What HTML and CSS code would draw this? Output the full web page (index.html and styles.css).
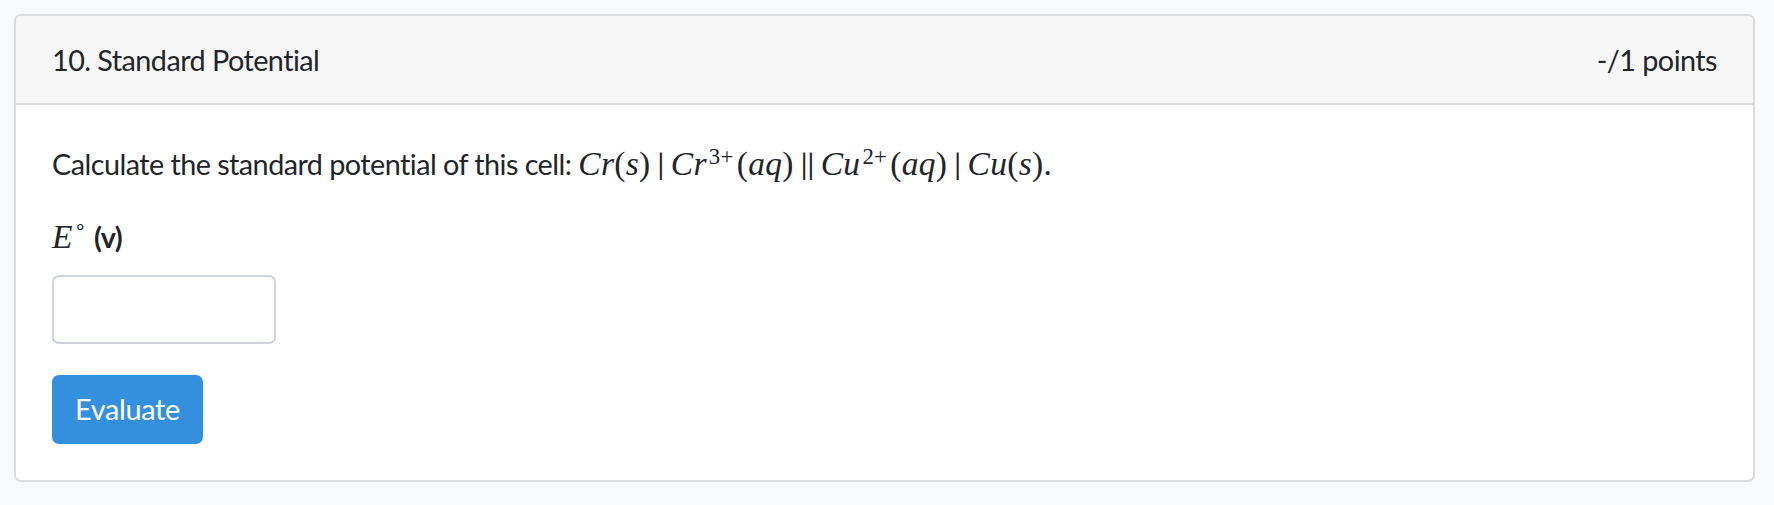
FILE: index.html
```html
<!DOCTYPE html>
<html lang="en">
<head>
<meta charset="utf-8">
<title>Standard Potential</title>
<link rel="stylesheet" href="styles.css">
</head>
<body>
<div class="page">
  <div class="card">
    <div class="card-header">
      <span class="title">10. Standard Potential</span>
      <span class="points">-/1 points</span>
    </div>
    <div class="card-body">
      <p class="question">Calculate the standard potential of this cell: <span class="math"><i>Cr</i>(<i>s</i>)</span> <span class="bar">|</span> <span class="math"><i>Cr</i><sup>3+</sup>(<i>aq</i>)</span> <span class="bar">||</span> <span class="math"><i>Cu</i><sup>2+</sup>(<i>aq</i>)</span> <span class="bar">|</span> <span class="math"><i>Cu</i>(<i>s</i>).</span></p>
      <label class="field-label" for="answer"><span class="math"><i>E</i><sup class="deg">∘</sup></span> <span class="unit">(v)</span></label>
      <input class="answer" id="answer" type="text">
      <button class="btn" type="button">Evaluate</button>
    </div>
  </div>
</div>
</body>
</html>
```
FILE: styles.css
```css
html, body {
  margin: 0;
  padding: 0;
  background: #f8fafc;
}

body {
  font-family: Lato, "Noto Sans", sans-serif;
  font-size: 28.8px;
  line-height: 1.5;
  color: #212529;
  font-variant-ligatures: none;
  letter-spacing: -0.55px;
}

.page {
  padding: 14px 19px 23px 14px;
}

.card {
  background: #ffffff;
  border: 2px solid #dcdcdc;
  border-radius: 7px;
  overflow: hidden;
}

.card-header {
  display: flex;
  justify-content: space-between;
  align-items: flex-start;
  background: #f7f7f7;
  border-bottom: 2px solid #dcdcdc;
  padding: 23px 36px 21px 36px;
  height: 43px;
}

.card-body {
  padding: 38px 36px 36px 36px;
  display: flex;
  flex-direction: column;
  align-items: flex-start;
}

.question {
  margin: 0 0 30px 0;
  height: 43px;
}

.math {
  font-family: "Liberation Serif", "Times New Roman", serif;
  font-size: 33.5px;
  line-height: 1;
  letter-spacing: 0.3px;
}

.math i {
  font-style: italic;
}

.math sup {
  font-size: 0.68em;
  line-height: 0;
  vertical-align: 0.48em;
  margin-left: 2px;
  margin-right: 3px;
}

.math sup.deg {
  font-size: 0.6em;
  vertical-align: 0.7em;
  margin-left: 1px;
  margin-right: 0;
}

.bar {
  font-family: Lato, "Noto Sans", sans-serif;
}

.field-label {
  display: block;
  height: 43px;
  margin: 0 0 16px 0;
}

.unit {
  font-weight: 700;
}

.answer {
  display: block;
  box-sizing: border-box;
  width: 224px;
  height: 69px;
  margin: 0 0 31px 0;
  padding: 0 22px;
  background: #ffffff;
  border: 2px solid #ced4da;
  border-radius: 7px;
  font-family: inherit;
  font-size: 28.8px;
  color: #495057;
  outline: none;
}

.btn {
  box-sizing: border-box;
  height: 69px;
  padding: 0 21px;
  background: #3490dc;
  border: 2px solid #3490dc;
  border-radius: 7px;
  color: #ffffff;
  font-family: inherit;
  font-size: 28.8px;
  line-height: 1.5;
  letter-spacing: -0.3px;
  cursor: pointer;
}
```
